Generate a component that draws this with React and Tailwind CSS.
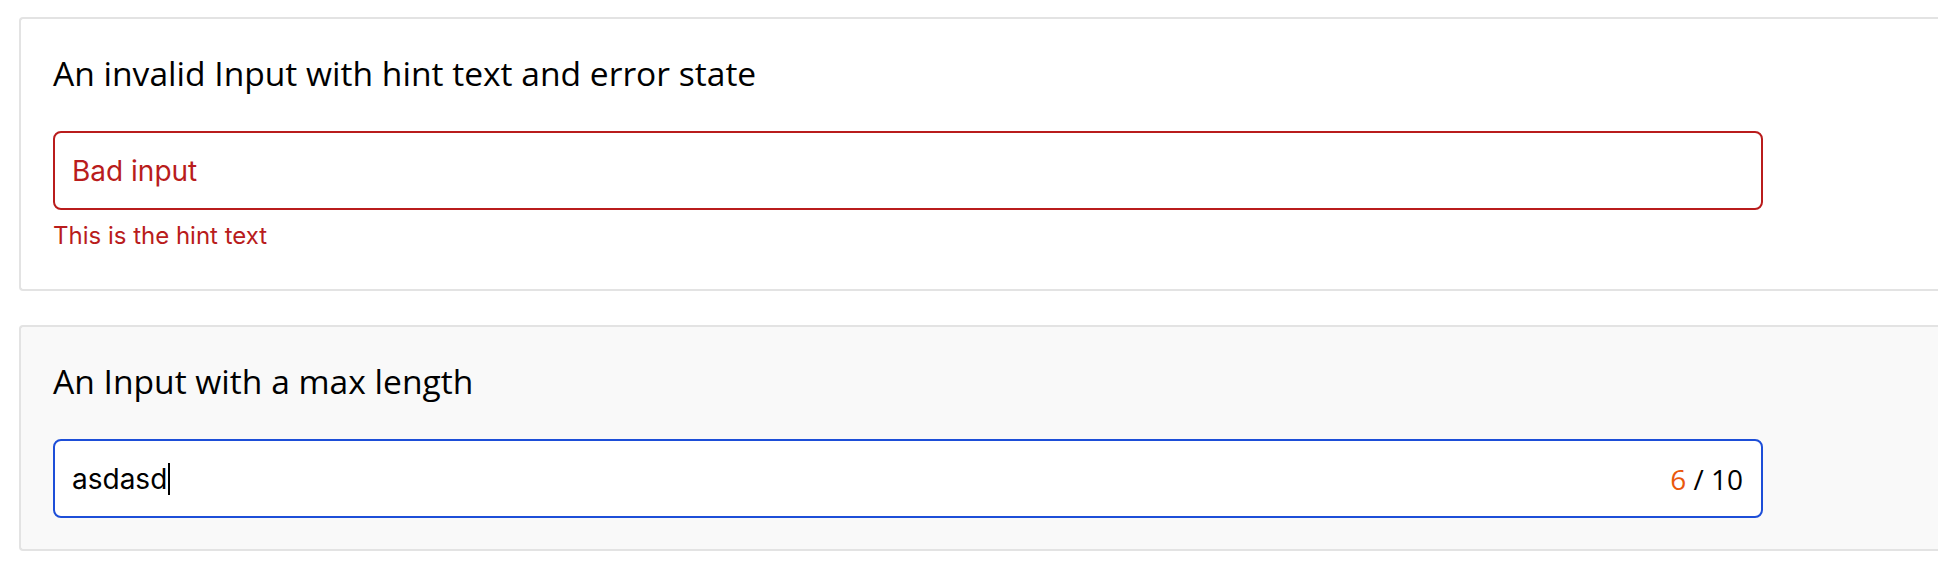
import React from 'react';

const Card = ({ title, muted, children }) => (
    <div
        className={`flex flex-col border-2 border-r-0 border-[#e3e3e3] rounded-l-[4px] pl-[32px] pt-[30px] ${
            muted ? 'bg-[#f9f9f9] pb-[31px]' : 'bg-white pb-[37px]'
        }`}
    >
        <h2 className="text-[33.6px] leading-[48px] font-medium text-black font-['Open_Sans',sans-serif]">{title}</h2>
        <div className="mt-[34px] flex flex-col">{children}</div>
    </div>
);

export default function App() {
    return (
        <div className="min-h-screen bg-white pt-[17px] pl-[19px] flex flex-col gap-[34px] font-['Inter',sans-serif]">
            <Card title="An invalid Input with hint text and error state">
                <div className="w-[1710px] h-[79px] flex items-center border-2 border-[#b91c1c] rounded-[8px] bg-white px-[17px]">
                    <span className="text-[28px] text-[#b91c1c]">Bad input</span>
                </div>
                <p className="mt-[10px] text-[24px] leading-[32px] text-[#b91c1c]">This is the hint text</p>
            </Card>

            <Card title="An Input with a max length" muted>
                <div className="w-[1710px] h-[79px] flex items-center border-2 border-[#1d4ed8] rounded-[8px] bg-white pl-[17px] pr-[18px]">
                    <span className="text-[28px] text-black">asdasd</span>
                    <span className="ml-[1px] w-[2px] h-[32px] bg-black" />
                    <span className="ml-auto text-[28px] font-medium text-black font-['Open_Sans',sans-serif]">
                        <span className="text-[#ea580c]">6</span> / 10
                    </span>
                </div>
            </Card>
        </div>
    );
}
